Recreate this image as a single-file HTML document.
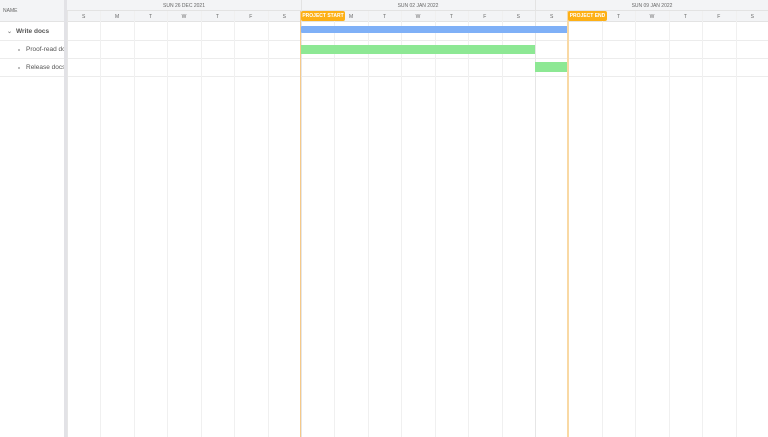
<!DOCTYPE html>
<html><head><style>
*{margin:0;padding:0;box-sizing:border-box}
body{width:768px;height:437px;overflow:hidden;background:#fff;font-family:"Liberation Sans",sans-serif;position:relative}
.a{position:absolute}
.hd{background:#f3f4f6}
.t{font-size:5px;color:#666;text-align:center}
.vl{position:absolute;top:10px;bottom:0;width:1px;background:#f0f0f0}
.hl{position:absolute;left:0;right:0;height:1px;background:#ececec}
.row{font-size:6.5px;color:#555;white-space:nowrap}
.dot{position:absolute;width:2px;height:2px;border-radius:1px;background:#aaa}
</style></head><body>
<div class="a hd" style="left:0;top:0;width:768px;height:22px;border-bottom:1px solid #e3e3e3"></div>
<div class="a t" style="left:3px;top:8px;font-size:5px;text-align:left">NAME</div>
<div class="hl" style="top:40px"></div>
<div class="hl" style="top:58px"></div>
<div class="hl" style="top:76px"></div>
<div class="a" style="top:10px;width:701px;height:1px;background:#e3e3e3;left:67px"></div>
<div id="g"></div>
<div class="a" style="left:0;top:22px;width:64px;height:60px;overflow:hidden">
<div class="a row" style="left:7px;top:6px;font-weight:bold;color:#555"><span style="font-size:6px;color:#888;margin-right:4px">&#8964;</span>Write docs</div>
<div class="dot" style="left:18px;top:27px"></div>
<div class="a row" style="left:26px;top:24px">Proof-read docs</div>
<div class="dot" style="left:18px;top:45px"></div>
<div class="a row" style="left:26px;top:42px">Release docs</div>
</div>
<div class="a" style="left:64px;top:0;width:3px;height:437px;background:#e2e2e6"></div>
<div class="a" style="left:301px;top:26px;width:267px;height:7px;background:#7fb0f7;border-radius:1px"></div>
<div class="a" style="left:301px;top:45px;width:234px;height:9px;background:#8de894"></div>
<div class="a" style="left:535px;top:62px;width:33px;height:10px;background:#8de894"></div>
<div class="a" style="left:300px;top:11px;width:1px;height:426px;background:#f5c98a;z-index:5"></div>
<div class="a" style="left:567px;top:11px;width:2px;height:426px;background:#f9d9a4;z-index:5"></div>
<div class="a" style="left:301px;top:11px;width:44px;height:10px;background:#fdb016;border-radius:2px;color:#fff;font-size:5px;font-weight:bold;line-height:10px;text-align:center;z-index:6">PROJECT START</div>
<div class="a" style="left:568px;top:11px;width:39px;height:10px;background:#fdb016;border-radius:2px;color:#fff;font-size:5px;font-weight:bold;line-height:10px;text-align:center;z-index:6">PROJECT END</div>
<script>
var g=document.getElementById('g'),h='',d=['S','M','T','W','T','F','S'],w=['SUN 26 DEC 2021','SUN 02 JAN 2022','SUN 09 JAN 2022'];
for(var k=0;k<3;k++){var x=67+k*234;h+='<div class="a t" style="left:'+x+'px;top:3px;width:234px">'+w[k]+'</div>';
h+='<div class="a" style="left:'+(x+234)+'px;top:0;width:1px;height:22px;background:#e3e3e3"></div>';}
for(var i=0;i<21;i++){var x=67+i*234/7;h+='<div class="a t" style="left:'+x+'px;top:14px;width:33.4px">'+d[i%7]+'</div>';
h+='<div class="vl" style="left:'+x+'px;top:11px;background:'+(i%7==0?'#e6e6e6':'#f0f0f0')+'"></div>';}
g.innerHTML=h;
</script>
</body></html>
